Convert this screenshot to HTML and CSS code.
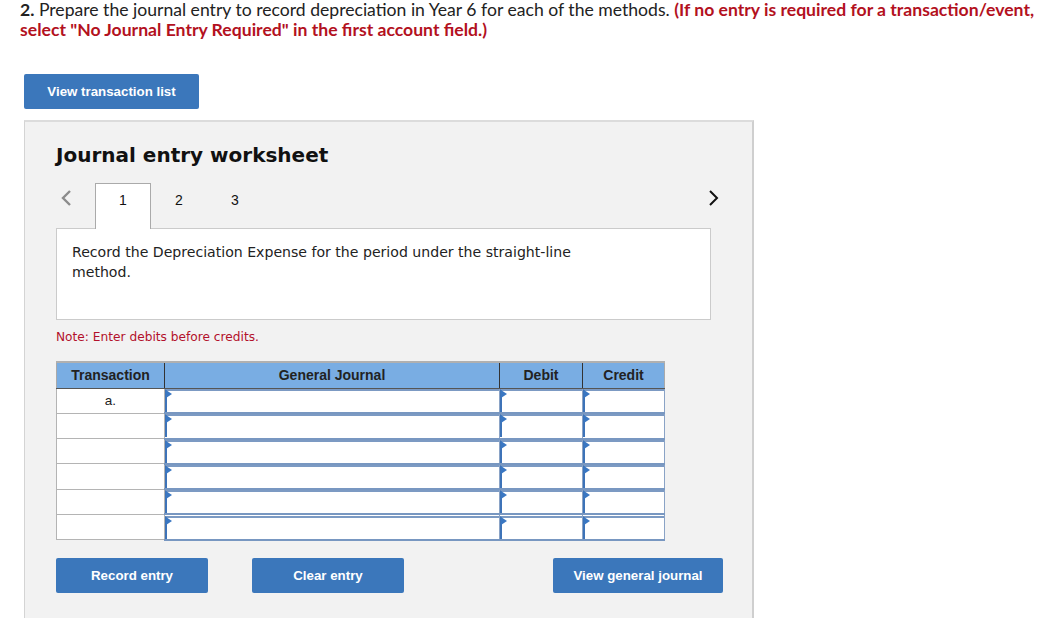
FILE: index.html
```html
<!DOCTYPE html>
<html>
<head>
<meta charset="utf-8">
<link rel="stylesheet" href="styles.css">
</head>
<body>
<div class="page">
  <p class="question"><b>2.</b> Prepare the journal entry to record depreciation in Year 6 for each of the methods. <span class="warn">(If no entry is required for a transaction/event, select "No Journal Entry Required" in the first account field.)</span></p>
  <button class="btn btn-list">View transaction list</button>
  <div class="panel">
    <h2 class="title">Journal entry worksheet</h2>
    <div class="tabs">
      <span class="chev chev-left"><svg width="12" height="18" viewBox="0 0 12 18"><path d="M10 2 L3 9 L10 16" fill="none" stroke="#8c8c8c" stroke-width="2.4"/></svg></span>
      <span class="tab active">1</span>
      <span class="tab">2</span>
      <span class="tab">3</span>
      <span class="spacer"></span>
      <span class="chev chev-right"><svg width="12" height="18" viewBox="0 0 12 18"><path d="M2 2 L9 9 L2 16" fill="none" stroke="#111" stroke-width="2"/></svg></span>
    </div>
    <div class="desc"><p>Record the Depreciation Expense for the period under the straight-line method.</p></div>
    <p class="note">Note: Enter debits before credits.</p>
    <table class="journal">
      <thead>
        <tr><th class="c-tr">Transaction</th><th class="c-gj">General Journal</th><th class="c-dr">Debit</th><th class="c-cr">Credit</th></tr>
      </thead>
      <tbody>
        <tr><td class="tr">a.</td><td class="inp"><div class="field"></div></td><td class="inp"><div class="field"></div></td><td class="inp"><div class="field"></div></td></tr>
        <tr><td class="tr"></td><td class="inp"><div class="field"></div></td><td class="inp"><div class="field"></div></td><td class="inp"><div class="field"></div></td></tr>
        <tr><td class="tr"></td><td class="inp"><div class="field"></div></td><td class="inp"><div class="field"></div></td><td class="inp"><div class="field"></div></td></tr>
        <tr><td class="tr"></td><td class="inp"><div class="field"></div></td><td class="inp"><div class="field"></div></td><td class="inp"><div class="field"></div></td></tr>
        <tr><td class="tr"></td><td class="inp"><div class="field"></div></td><td class="inp"><div class="field"></div></td><td class="inp"><div class="field"></div></td></tr>
        <tr><td class="tr"></td><td class="inp"><div class="field"></div></td><td class="inp"><div class="field"></div></td><td class="inp"><div class="field"></div></td></tr>
      </tbody>
    </table>
    <div class="actions">
      <button class="btn btn-record">Record entry</button>
      <button class="btn btn-clear">Clear entry</button>
      <button class="btn btn-view">View general journal</button>
    </div>
  </div>
</div>
</body>
</html>
```

FILE: styles.css
```css
* { box-sizing: border-box; }
html, body { margin: 0; padding: 0; background: #fff; }
.page { padding: 0 0 0 20px; }
.question {
  margin: 0;
  font-family: "Lato", "Liberation Sans", sans-serif;
  font-size: 17.6px;
  line-height: 20px;
  color: #222;
  width: 1035px;
}
.question b { font-weight: 700; }
.warn { color: #b3111e; font-weight: 700; }

.btn {
  display: block;
  border: none;
  border-radius: 2px;
  background: #3b77bb;
  color: #fff;
  font-family: "Liberation Sans", Arial, sans-serif;
  font-weight: 700;
  font-size: 13.3px;
  height: 35px;
  padding: 0;
  cursor: pointer;
}
.btn-list { margin: 34px 0 0 4px; width: 175px; }

.panel {
  margin: 11px 0 0 4px;
  width: 730px;
  height: 520px;
  background: #f2f2f2;
  border: 1px solid #d4d4d4;
  border-top: 2px solid #dcdcdc;
  border-right: 2px solid #cfcfcf;
  padding: 21px 0 0 31px;
}
.title {
  margin: 0;
  font-family: "DejaVu Sans", Verdana, sans-serif;
  font-weight: 700;
  font-size: 20px;
  line-height: 24px;
  color: #111;
}
.tabs {
  margin-top: 16px;
  width: 664px;
  height: 45px;
  display: flex;
  align-items: flex-start;
  position: relative;
  z-index: 1;
}
.chev { display: flex; height: 30px; align-items: center; }
.chev-left { width: 39px; padding-left: 4px; }
.chev-right { width: 12px; }
.spacer { flex: 1; }
.tab {
  width: 56px;
  height: 46px;
  display: flex;
  justify-content: center;
  padding-top: 8px;
  font-family: "Liberation Sans", Arial, sans-serif;
  font-size: 14px;
  color: #111;
  border: 1px solid transparent;
  border-bottom: none;
}
.tab.active { background: #fff; border-color: #aaa; }

.desc {
  width: 655px;
  height: 92px;
  background: #fff;
  border: 1px solid #cbcbcb;
  padding: 13px 15px 0;
}
.desc p {
  margin: 0;
  width: 520px;
  font-family: "DejaVu Sans", Verdana, sans-serif;
  font-size: 14.1px;
  line-height: 20px;
  color: #222;
}
.note {
  margin: 9px 0 0;
  font-family: "DejaVu Sans", Verdana, sans-serif;
  font-size: 12.2px;
  line-height: 16px;
  color: #b3112b;
}

.journal {
  margin-top: 16px;
  border-collapse: collapse;
  width: 608px;
  table-layout: fixed;
  font-family: "Liberation Sans", Arial, sans-serif;
}
.journal thead tr { border-top: 2px solid #b0b0b0; }
.journal th {
  background: #79ade3;
  height: 26px;
  font-size: 14px;
  font-weight: 700;
  color: #222;
  padding: 0;
  border-right: 1px solid #333;
  border-bottom: 1px solid #555;
  border-left: 1px solid #aaa;
}
.journal th.c-cr { border-right: 1px solid #aaa; }
.c-tr { width: 108px; }
.c-gj { width: 335px; }
.c-dr { width: 83px; }
.c-cr { width: 82px; }
.journal td { padding: 0; height: 25.3px; }
.journal td.tr {
  background: #fff;
  border: 1px solid #b4b4b4;
  text-align: center;
  font-size: 13.5px;
  color: #222;
}
.journal td.inp {
  background: #fff;
  border-top: 1px solid #9db2cf;
  border-bottom: 2px solid #7897c1;
  border-left: 1px solid #555;
  border-right: 1px solid #8aa3c6;
}
.field {
  position: relative;
  height: 23px;
  border-top: 2px solid #7c9ac3;
  border-left: 2px solid #3d73b8;
  background: #fff;
}
.field::before {
  content: "";
  position: absolute;
  left: -1px;
  top: -1px;
  border-left: 6px solid #3a77c2;
  border-top: 4px solid transparent;
  border-bottom: 4px solid transparent;
}

.actions { display: flex; margin-top: 17px; }
.btn-record { width: 152px; }
.btn-clear { width: 152px; margin-left: 44px; }
.btn-view { width: 170px; margin-left: 149px; }
```
